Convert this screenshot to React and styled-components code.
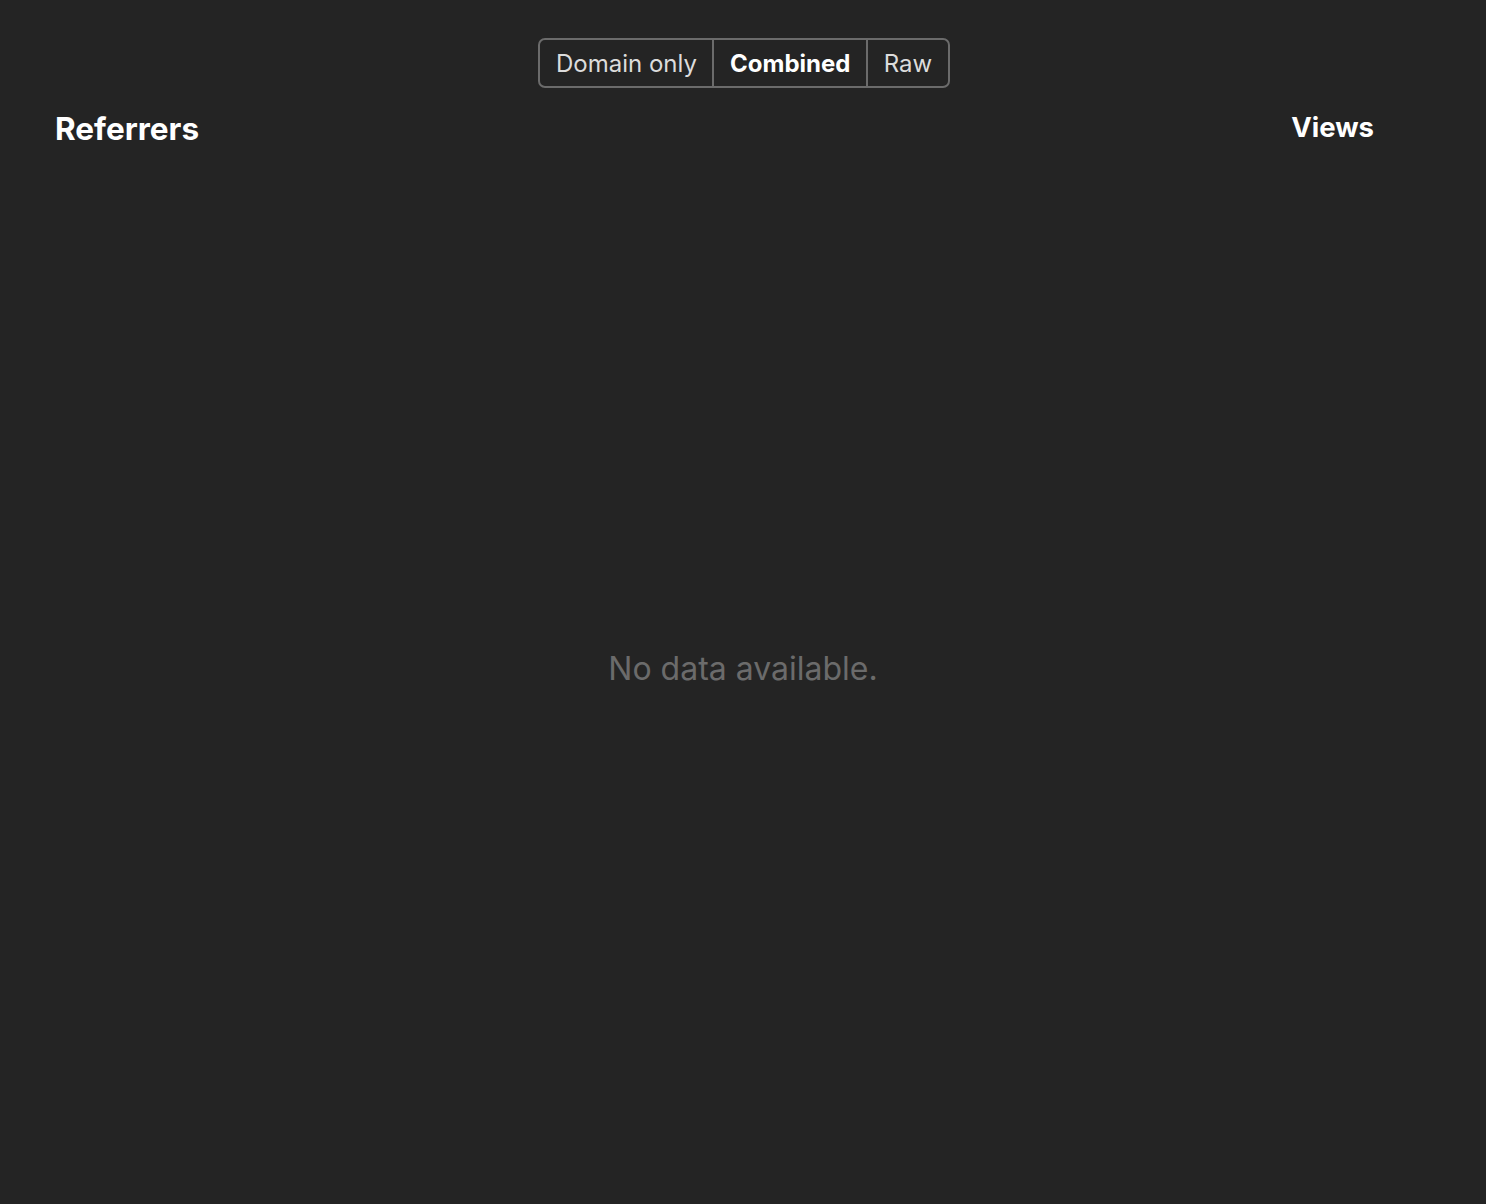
import React from "react";
import styled, { createGlobalStyle } from "styled-components";

const Global = createGlobalStyle`
  html, body { margin: 0; padding: 0; background: #242424; }
  body { font-family: Inter, "Noto Sans", sans-serif; color: #ffffff; }
`;

const Page = styled.div`
  min-height: 1204px;
  background: #242424;
  display: flex;
  flex-direction: column;
  padding: 38px 55px 0 55px;
  box-sizing: border-box;
`;

const ToggleGroup = styled.div`
  align-self: center;
  display: flex;
  border: 2px solid #6b6b6b;
  border-radius: 7px;
  overflow: hidden;
  margin-left: 2px;
`;

const ToggleButton = styled.button`
  font-family: Inter, sans-serif;
  font-size: 24px;
  line-height: 46px;
  height: 46px;
  padding: 0 15.6px;
  padding-top: 1px;
  background: transparent;
  border: none;
  border-left: ${(p) => (p.$first ? "none" : "2px solid #6b6b6b")};
  color: ${(p) => (p.$active ? "#ffffff" : "#dcdcdc")};
  font-weight: ${(p) => (p.$active ? 700 : 400)};
  cursor: pointer;
`;

const HeaderRow = styled.div`
  display: flex;
  justify-content: space-between;
  align-items: flex-start;
  margin-top: 19px;
`;

const Title = styled.h2`
  margin: 0;
  padding-top: 2px;
  font-size: 31.5px;
  font-weight: 700;
  color: #ffffff;
`;

const ColumnLabel = styled.div`
  padding-top: 3px;
  font-size: 27.5px;
  font-weight: 700;
  color: #ffffff;
  margin-right: 57px;
`;

const Empty = styled.div`
  flex: 1;
  display: flex;
  justify-content: center;
  padding-top: 501px;
  font-size: 32px;
  color: #6b6b6b;
`;

export default function App() {
  const opts = ["Domain only", "Combined", "Raw"];
  return (
    <>
      <Global />
      <Page>
        <ToggleGroup>
          {opts.map((o, i) => (
            <ToggleButton key={o} $first={i === 0} $active={o === "Combined"}>
              {o}
            </ToggleButton>
          ))}
        </ToggleGroup>
        <HeaderRow>
          <Title>Referrers</Title>
          <ColumnLabel>Views</ColumnLabel>
        </HeaderRow>
        <Empty>No data available.</Empty>
      </Page>
    </>
  );
}
